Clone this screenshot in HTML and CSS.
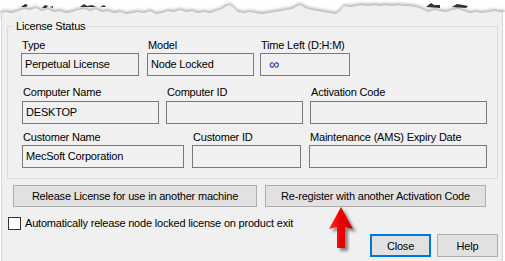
FILE: index.html
```html
<!DOCTYPE html>
<html>
<head>
<meta charset="utf-8">
<link rel="stylesheet" href="styles.css">
</head>
<body>
<div class="dialog">
  <fieldset class="group">
    <legend>License Status</legend>
    <div class="row r1">
      <div class="field f-type"><label>Type</label><div class="box">Perpetual License</div></div>
      <div class="field f-model"><label>Model</label><div class="box">Node Locked</div></div>
      <div class="field f-time"><label>Time Left (D:H:M)</label><div class="box inf">∞</div></div>
    </div>
    <div class="row r2">
      <div class="field f-cname"><label>Computer Name</label><div class="box">DESKTOP</div></div>
      <div class="field f-cid"><label>Computer ID</label><div class="box"></div></div>
      <div class="field f-act"><label>Activation Code</label><div class="box"></div></div>
    </div>
    <div class="row r3">
      <div class="field f-cuname"><label>Customer Name</label><div class="box">MecSoft Corporation</div></div>
      <div class="field f-cuid"><label>Customer ID</label><div class="box"></div></div>
      <div class="field f-ams"><label>Maintenance (AMS) Expiry Date</label><div class="box"></div></div>
    </div>
  </fieldset>
  <div class="actions">
    <button class="btn btn-release">Release License for use in another machine</button>
    <button class="btn btn-rereg">Re-register with another Activation Code</button>
  </div>
  <label class="check"><span class="cb"></span><span>Automatically release node locked license on product exit</span></label>
  <div class="footer">
    <button class="btn btn-foot btn-default">Close</button>
    <button class="btn btn-foot">Help</button>
  </div>
</div>

<svg class="torn" width="505" height="19" viewBox="0 0 505 19">
  <defs>
    <filter id="blur" x="-5%" y="-50%" width="110%" height="200%"><feGaussianBlur stdDeviation="1.5"/></filter>
    <filter id="blur2" x="-20%" y="-100%" width="140%" height="300%"><feGaussianBlur stdDeviation="0.6"/></filter>
  </defs>
  <rect x="0" y="0" width="505" height="19" fill="#ffffff"/>
  <path filter="url(#blur)" fill="#b4b4b4" transform="translate(0,-2)" d="M0,13 L6,12 L12,13 L18,11 L24,9 L30,10 L36,8 L42,11 L48,9 L54,12 L60,11 L66,13 L72,12 L78,10 L84,9 L90,11 L96,9 L102,12 L108,11 L114,13 L120,12 L126,14 L132,13 L138,12 L144,13 L150,11 L156,14 L162,13 L168,11 L174,12 L180,10 L186,12 L192,11 L198,13 L204,12 L210,13 L216,11 L222,9 L226,6 L230,5 L234,8 L238,12 L244,13 L250,12 L256,13 L262,14 L268,13 L274,12 L280,11 L286,10 L292,9 L297,6 L301,5 L305,8 L312,10 L318,11 L324,12 L330,13 L336,14 L341,10 L344,6 L350,7 L356,6 L362,5 L368,6 L374,5 L380,6 L386,5 L392,6 L398,5 L404,6 L410,6 L416,7 L422,9 L428,12 L434,10 L440,11 L446,12 L452,10 L458,9 L464,11 L470,13 L476,12 L482,13 L488,12 L494,11 L500,12 L505,12 L505,19 L0,19 Z"/>
  <g fill="#333" filter="url(#blur2)">
    <path d="M21,7 L25,4 L28,5 L26,7 Z"/>
    <path d="M42,8 L45,5 L48,6 L46,8 Z"/>
    <path d="M50,7 L53,6 L53,8 Z"/>
    <path d="M80,7 L84,4 L87,6 L92,5 L96,7 Z"/>
    <path d="M100,7 L104,5 L106,7 Z"/>
    <path d="M426,7 L431,3 L434,5 L440,5 L440,8 Z"/>
    <path d="M452,7 L457,4 L463,5 L468,6 L466,8 Z"/>
  </g>
  <path fill="#f0f0f0" d="M0,13 L6,12 L12,13 L18,11 L24,9 L30,10 L36,8 L42,11 L48,9 L54,12 L60,11 L66,13 L72,12 L78,10 L84,9 L90,11 L96,9 L102,12 L108,11 L114,13 L120,12 L126,14 L132,13 L138,12 L144,13 L150,11 L156,14 L162,13 L168,11 L174,12 L180,10 L186,12 L192,11 L198,13 L204,12 L210,13 L216,11 L222,9 L226,6 L230,5 L234,8 L238,12 L244,13 L250,12 L256,13 L262,14 L268,13 L274,12 L280,11 L286,10 L292,9 L297,6 L301,5 L305,8 L312,10 L318,11 L324,12 L330,13 L336,14 L341,10 L344,6 L350,7 L356,6 L362,5 L368,6 L374,5 L380,6 L386,5 L392,6 L398,5 L404,6 L410,6 L416,7 L422,9 L428,12 L434,10 L440,11 L446,12 L452,10 L458,9 L464,11 L470,13 L476,12 L482,13 L488,12 L494,11 L500,12 L505,12 L505,19 L0,19 Z"/>
  <rect x="1" y="12" width="1" height="7" fill="#d6d6d6"/>
  <rect x="502" y="12" width="1" height="7" fill="#d6d6d6"/>
  <rect x="503" y="12" width="2" height="7" fill="#ffffff"/>
</svg>

<svg class="arrow" width="50" height="60" viewBox="320 200 50 60">
  <defs>
    <linearGradient id="red" x1="0" y1="0" x2="1" y2="0">
      <stop offset="0" stop-color="#ff2a2a"/>
      <stop offset="0.5" stop-color="#ee0000"/>
      <stop offset="1" stop-color="#c80000"/>
    </linearGradient>
    <filter id="sh" x="-50%" y="-50%" width="200%" height="200%">
      <feDropShadow dx="3" dy="3" stdDeviation="1.8" flood-color="#000" flood-opacity="0.45"/>
    </filter>
  </defs>
  <polygon filter="url(#sh)" fill="url(#red)" points="341,207 353,229 345,227 345,248 337,248 337,227 329,229"/>
</svg>
</body>
</html>
```
FILE: styles.css
```css
* { box-sizing: border-box; }
html, body { margin: 0; padding: 0; }
body {
  width: 505px;
  height: 261px;
  overflow: hidden;
  background: #ffffff;
  position: relative;
  font-family: "Liberation Sans", Arial, sans-serif;
  font-size: 11px;
  letter-spacing: -0.2px;
  color: #000;
}
.dialog {
  margin-left: 1px;
  width: 502px;
  height: 261px;
  background: #f0f0f0;
  border-left: 1px solid #d6d6d6;
  border-right: 1px solid #d6d6d6;
  padding-top: 20px;
}
.group {
  margin: 0 0 0 5px;
  width: 491px;
  padding: 6px 0 10px 0;
  border: 1px solid #dcdcdc;
  min-inline-size: 0;
}
.group legend {
  margin-left: 6px;
  padding: 0 2px;
  line-height: 13px;
  height: 13px;
}
.row { display: flex; }
.r1 { padding-left: 13px; }
.r2 { margin-top: 10px; padding-left: 14px; }
.r3 { margin-top: 7px; padding-left: 14px; }
.field label {
  display: block;
  height: 13px;
  line-height: 13px;
  padding-left: 1px;
  margin-bottom: 1px;
  white-space: nowrap;
}
.r2 .field label { margin-bottom: 2px; }
.box {
  height: 23px;
  border: 1px solid #7a7a7a;
  background: #f0f0f0;
  padding: 0 3px;
  line-height: 20px;
  white-space: nowrap;
  overflow: hidden;
}
.box.inf { padding-left: 8px; color: #1a1a80; font-size: 14px; }
.f-type { width: 118px; }
.f-model { width: 107px; margin-left: 8px; }
.f-time { width: 90px; margin-left: 6px; }
.f-cname { width: 137px; }
.f-cid { width: 137px; margin-left: 7px; }
.f-act { width: 177px; margin-left: 7px; }
.f-cuname { width: 162px; }
.f-cuid { width: 109px; margin-left: 8px; }
.f-ams { width: 178px; margin-left: 8px; }

.btn {
  font-family: inherit;
  font-size: 11px;
  letter-spacing: -0.2px;
  color: #000;
  background: #e1e1e1;
  border: 1px solid #adadad;
  padding: 0;
  margin: 0;
  border-radius: 0;
  text-align: center;
}
.actions {
  display: flex;
  gap: 8px;
  margin-top: 6px;
  padding-left: 11px;
}
.btn-release { width: 244px; height: 22px; }
.btn-rereg { width: 221px; height: 22px; }
.check {
  display: flex;
  align-items: center;
  gap: 4px;
  margin-top: 10px;
  padding-left: 6px;
  line-height: 13px;
  height: 13px;
}
.cb {
  width: 13px;
  height: 13px;
  border: 1px solid #333;
  background: #fff;
  flex: none;
}
.footer {
  display: flex;
  justify-content: flex-end;
  gap: 6px;
  margin-top: 4px;
  padding-right: 4px;
}
.btn-foot { width: 61px; height: 23px; }
.btn-default {
  border-color: #0078d7;
  box-shadow: inset 0 0 0 1px #0078d7;
}
.torn {
  position: absolute;
  left: 0;
  top: 0;
}
.arrow {
  position: absolute;
  left: 320px;
  top: 200px;
}
```
